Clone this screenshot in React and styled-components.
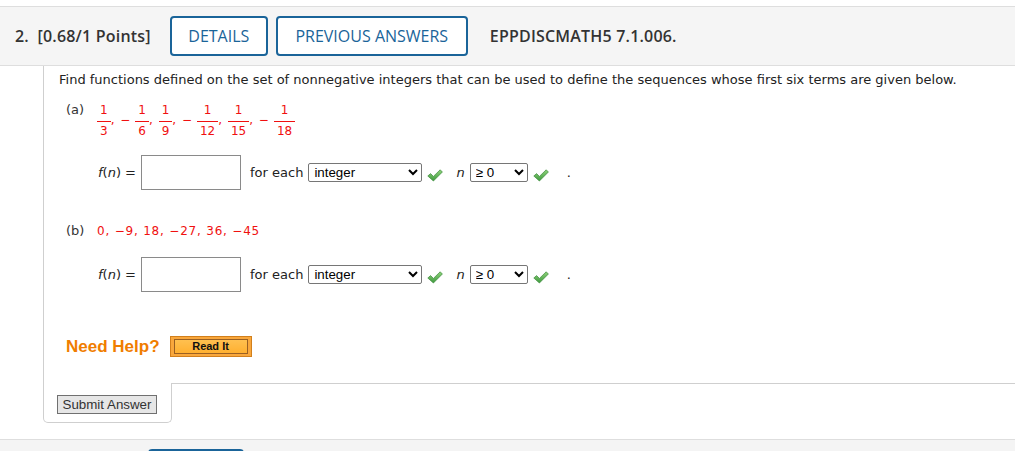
import React from "react";
import styled, { createGlobalStyle } from "styled-components";

const Global = createGlobalStyle`
  html, body { margin: 0; padding: 0; background: #fff; }
  body { font-family: "DejaVu Sans", Verdana, sans-serif; color: #222; }
`;

const Page = styled.div`
  padding-top: 6px;
  width: 1015px;
  height: 451px;
  box-sizing: border-box;
  overflow: hidden;
`;

const Header = styled.header`
  box-sizing: border-box;
  height: 60px;
  background: #f5f5f5;
  border-top: 1px solid #dedede;
  border-bottom: 1px solid #dedede;
  display: flex;
  align-items: center;
  padding-left: 15px;
  font-family: "Open Sans", sans-serif;
  font-size: 16px;
  color: #333;
`;

const Num = styled.span`
  font-weight: 600;
  margin-right: 9px;
`;

const Points = styled.span`
  font-weight: 600;
  letter-spacing: 0.2px;
  margin-right: 19px;
`;

const HeadButton = styled.button`
  box-sizing: border-box;
  height: 40px;
  width: ${(p) => p.$w}px;
  margin-right: ${(p) => p.$mr}px;
  border: 2px solid #1a6499;
  border-radius: 4px;
  background: #fff;
  color: #1a6499;
  font-family: "Open Sans", sans-serif;
  font-size: 16px;
  text-transform: uppercase;
  padding: 0;
  cursor: pointer;
`;

const Code = styled.span`
  font-weight: 600;
  color: #333;
  letter-spacing: 0.2px;
`;

const Container = styled.div`
  margin-left: 43px;
`;

const Body = styled.div`
  border-left: 1px solid #cfcfcf;
  padding: 6px 0 26px 15px;
  display: flex;
  flex-direction: column;
  align-items: flex-start;
`;

const Prompt = styled.p`
  margin: 0;
  font-size: 13px;
  line-height: 16px;
  color: #222;
`;

const PartRow = styled.div`
  display: flex;
  align-items: flex-start;
  margin-top: ${(p) => p.$mt}px;
  margin-left: 7px;
  font-size: 12px;
  line-height: 14px;
`;

const PartLabel = styled.span`
  color: #333;
  font-size: 13px;
  width: 31px;
`;

const Red = styled.span`
  color: #f01010;
  white-space: pre;
  letter-spacing: 0.8px;
`;

const Frac = styled.span`
  display: inline-flex;
  flex-direction: column;
  align-items: center;
  color: #f01010;
`;

const Numer = styled.span`
  padding: 0 3px 4px;
  border-bottom: 1px solid #f01010;
  align-self: stretch;
  text-align: center;
`;

const Denom = styled.span`
  padding: 2px 3px 0;
`;

const Sep = styled.span`
  color: #f01010;
  margin-top: ${(p) => p.$mt}px;
  margin-right: ${(p) => p.$mr || 0}px;
  white-space: pre;
`;

const AnswerRow = styled.div`
  display: flex;
  align-items: center;
  margin-top: ${(p) => p.$mt}px;
  margin-left: 39px;
  font-size: 13px;
  color: #222;
`;

const Fn = styled.span`
  margin-right: 5px;
  i { font-style: italic; }
`;

const TextBox = styled.input`
  box-sizing: border-box;
  width: 100px;
  height: 35px;
  border: 1px solid #8a8a8a;
  margin: 0 9px 0 0;
  padding: 2px 4px;
  font-size: 14px;
`;

const Select = styled.select`
  box-sizing: border-box;
  width: ${(p) => p.$w}px;
  height: 19px;
  margin-left: ${(p) => p.$ml}px;
  font-family: "Liberation Sans", Arial, sans-serif;
  font-size: 13.33px;
  color: #000;
  border: 1px solid #767676;
  border-radius: 2px;
  background: #fff;
  padding: 0 0 0 1px;
`;

const CheckWrap = styled.span`
  display: inline-flex;
  margin-left: 5px;
  margin-top: 6px;
`;

const NVar = styled.i`
  margin-left: 13px;
  font-style: italic;
`;

const Dot = styled.span`
  margin-left: 18px;
`;

const HelpRow = styled.div`
  display: flex;
  align-items: center;
  margin-top: 44px;
  margin-left: 7px;
`;

const NeedHelp = styled.span`
  font-family: "Liberation Sans", Arial, sans-serif;
  font-weight: bold;
  font-size: 17px;
  color: #f07d00;
  margin-right: 10px;
`;

const ReadIt = styled.button`
  box-sizing: border-box;
  width: 82px;
  height: 21px;
  padding: 2px 3px;
  border: 1px solid #d2801c;
  background: #f9a73c;
  cursor: pointer;
  display: flex;
`;

const ReadInner = styled.span`
  flex: 1;
  border: 1px solid #9a6022;
  background: linear-gradient(#ffc050, #ffb030);
  font-family: "Liberation Sans", Arial, sans-serif;
  font-weight: bold;
  font-size: 11px;
  line-height: 13px;
  color: #111;
  text-align: center;
`;

const BottomRow = styled.div`
  display: flex;
`;

const SubmitTab = styled.div`
  box-sizing: border-box;
  width: 129px;
  height: 40px;
  border: 1px solid #cfcfcf;
  border-top: none;
  border-radius: 0 0 5px 5px;
  padding: 11px 0 0 13px;
`;

const Filler = styled.div`
  flex: 1;
  border-top: 1px solid #cfcfcf;
`;

const SubmitButton = styled.button`
  box-sizing: border-box;
  width: 100px;
  height: 19px;
  padding: 0;
  border: 1px solid #707070;
  background: #e6e6e6;
  font-family: "Liberation Sans", Arial, sans-serif;
  font-size: 13.33px;
  color: #333;
  cursor: pointer;
`;

const Footer = styled.div`
  margin-top: 16px;
  border-top: 1px solid #dedede;
  background: #f4f4f4;
  height: 30px;
  padding: 9px 0 0 148px;
`;

const FooterButton = styled.div`
  width: 96px;
  height: 30px;
  box-sizing: border-box;
  border: 2px solid #1a6499;
  border-radius: 4px;
  background: #fff;
`;

const Check = () => (
  <svg width="16" height="13" viewBox="0 0 16 13">
    <defs>
      <linearGradient id="cg" x1="0" y1="0" x2="0" y2="1">
        <stop offset="0" stopColor="#8fd27a" />
        <stop offset="1" stopColor="#3f9a3f" />
      </linearGradient>
    </defs>
    <path
      d="M0.8 7 L3.6 4.6 L6.4 7.4 L13.2 0.8 L15.4 3 L6.4 12 Z"
      fill="url(#cg)"
      stroke="#3b8a3b"
      strokeWidth="0.7"
      strokeLinejoin="round"
    />
  </svg>
);

const Fraction = ({ d }) => (
  <Frac>
    <Numer>1</Numer>
    <Denom>{d}</Denom>
  </Frac>
);

const Comma = () => <Sep $mt={10} $mr={2}>, </Sep>;
const Minus = () => <Sep $mt={10} $mr={5}>−</Sep>;

const Answer = ({ mt }) => (
  <AnswerRow $mt={mt}>
    <Fn>
      <i>f</i>(<i>n</i>) =
    </Fn>
    <TextBox type="text" />
    <span>for each</span>
    <Select $w={114} $ml={5} defaultValue="integer">
      <option value="integer">integer</option>
    </Select>
    <CheckWrap>
      <Check />
    </CheckWrap>
    <NVar>n</NVar>
    <Select $w={58} $ml={5} defaultValue="ge0">
      <option value="ge0">≥ 0</option>
    </Select>
    <CheckWrap>
      <Check />
    </CheckWrap>
    <Dot>.</Dot>
  </AnswerRow>
);

export default function App() {
  return (
    <Page>
      <Global />
      <Header>
        <Num>2.</Num>
        <Points>[0.68/1 Points]</Points>
        <HeadButton $w={98} $mr={8}>Details</HeadButton>
        <HeadButton $w={192} $mr={22}>Previous Answers</HeadButton>
        <Code>EPPDISCMATH5 7.1.006.</Code>
      </Header>
      <Container>
        <Body>
          <Prompt>
            Find functions defined on the set of nonnegative integers that can be used to define the sequences whose first six terms are given below.
          </Prompt>
          <PartRow $mt={15}>
            <PartLabel>(a)</PartLabel>
            <Fraction d="3" />
            <Comma />
            <Minus />
            <Fraction d="6" />
            <Comma />
            <Fraction d="9" />
            <Comma />
            <Minus />
            <Fraction d="12" />
            <Comma />
            <Fraction d="15" />
            <Comma />
            <Minus />
            <Fraction d="18" />
          </PartRow>
          <Answer mt={17} />
          <PartRow $mt={34}>
            <PartLabel>(b)</PartLabel>
            <Red>0, −9, 18, −27, 36, −45</Red>
          </PartRow>
          <Answer mt={19} />
          <HelpRow>
            <NeedHelp>Need Help?</NeedHelp>
            <ReadIt>
              <ReadInner>Read It</ReadInner>
            </ReadIt>
          </HelpRow>
        </Body>
        <BottomRow>
          <SubmitTab>
            <SubmitButton>Submit Answer</SubmitButton>
          </SubmitTab>
          <Filler />
        </BottomRow>
      </Container>
      <Footer>
        <FooterButton />
      </Footer>
    </Page>
  );
}
